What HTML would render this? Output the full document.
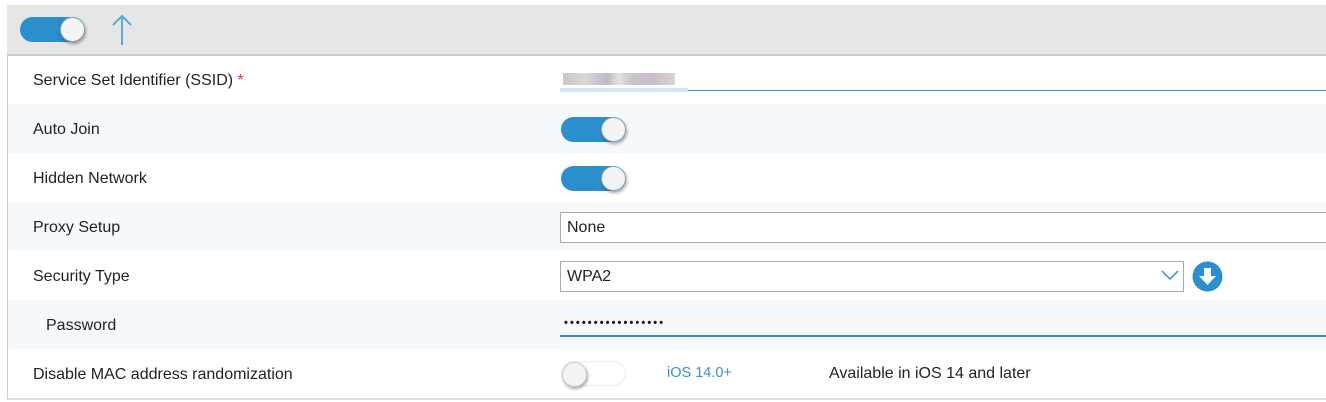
<!DOCTYPE html>
<html><head><style>
body{margin:0;width:1326px;height:402px;background:#fff;font-family:"Liberation Sans",Arial,sans-serif;font-size:16px;color:#222;position:relative;overflow:hidden}
.abs{position:absolute}
.hdr{left:7px;top:5px;width:1319px;height:49px;background:#e6e6e6;border-bottom:2px solid #ccc}
.box{left:7px;top:56px;width:1319px;height:342px;border-left:1px solid #ccc;border-bottom:2px solid #ddd}
.row{position:absolute;left:8px;width:1318px;height:49px}
.lt{background:#f6f9fc}
.lbl{position:absolute;left:33px;line-height:20px}
.tg{position:absolute;width:65px;height:25px;border-radius:13px;background:#2a8fcc}
.tg .k{position:absolute;right:0;top:0;width:25px;height:25px;border-radius:50%;background:#f3f3f3;box-shadow:1px 2px 3px rgba(0,0,0,.35);border:1px solid #8ab;box-sizing:border-box}
.off{background:#fff;border:1px solid #eee;box-sizing:border-box}
.off .k{left:0;right:auto;border:1px solid #ccc}
.sel{position:absolute;left:560px;border:1px solid #aaa;box-sizing:border-box;height:31px;line-height:30px;padding-left:6px;background:#fff}
</style></head><body>
<div class="abs hdr"></div>
<div class="tg" style="left:20px;top:17px"><div class="k"></div></div>
<svg class="abs" style="left:110px;top:14px" width="24" height="32"><path d="M12 31V2M3 11L12 2L21 11" stroke="#5aa8d8" stroke-width="2" fill="none"/></svg>
<div class="abs box"></div>
<div class="row lt" style="top:104px"></div>
<div class="row lt" style="top:202px"></div>
<div class="row lt" style="top:300px"></div>

<div class="lbl" style="top:71px">Service Set Identifier (SSID) <span style="color:#d33">*</span></div>
<div class="abs" style="left:563px;top:73px;width:112px;height:12px;background:linear-gradient(90deg,#bbb,#ccc 20%,#aab 40%,#ddd 50%,#bbb 60%,#bab 80%,#ccc);opacity:.8"></div>
<div class="abs" style="left:560px;top:88px;width:128px;height:4px;background:#d3e6f4"></div>
<div class="abs" style="left:688px;top:90px;width:638px;height:1px;background:#3a8fc0"></div>

<div class="lbl" style="top:120px">Auto Join</div>
<div class="tg" style="left:561px;top:117px"><div class="k"></div></div>
<div class="lbl" style="top:169px">Hidden Network</div>
<div class="tg" style="left:561px;top:166px"><div class="k"></div></div>

<div class="lbl" style="top:218px">Proxy Setup</div>
<div class="sel" style="top:212px;width:770px">None</div>

<div class="lbl" style="top:267px">Security Type</div>
<div class="sel" style="top:261px;width:624px">WPA2</div>
<svg class="abs" style="left:1161px;top:269px" width="18" height="12"><path d="M1 2L9 10L17 2" stroke="#2a8fcc" stroke-width="1.5" fill="none"/></svg>
<svg class="abs" style="left:1192px;top:261px" width="31" height="31"><circle cx="15.5" cy="15.5" r="15" fill="#2a8fcc"/><path d="M12 7h7v8h5l-8.5 9l-8.5-9h5z" fill="#fff"/></svg>

<div class="lbl" style="top:316px;left:46px">Password</div>
<div class="abs" style="left:564px;top:317px;font-size:11px;letter-spacing:2.1px;font-weight:bold;color:#111">•••••••••••••••••</div>
<div class="abs" style="left:560px;top:335px;width:766px;height:2px;background:#2a8fcc"></div>

<div class="lbl" style="top:365px">Disable MAC address randomization</div>
<div class="tg off" style="left:561px;top:361px"><div class="k"></div></div>
<div class="abs" style="left:667px;top:365px;color:#3a8fc8;font-size:14.5px">iOS 14.0+</div>
<div class="abs" style="left:829px;top:365px">Available in iOS 14 and later</div>
</body></html>
